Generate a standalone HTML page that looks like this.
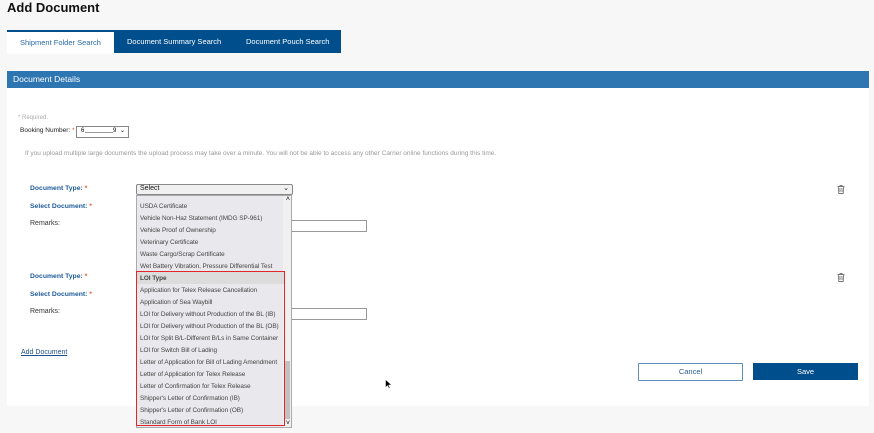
<!DOCTYPE html><html><head><style>
body{margin:0;width:874px;height:433px;background:#f7f7f7;font-family:"Liberation Sans",Arial,sans-serif;position:relative;overflow:hidden}
.a{position:absolute;white-space:nowrap}
.lbl{font-size:6.8px;color:#1d5a9a;font-weight:bold}
.req{color:#e2572a}
.li{position:absolute;left:3px;font-size:6.4px;color:#444;line-height:12px;letter-spacing:-0.05px}
</style></head><body>
<div class="a" style="left:7px;top:0;font-size:13px;font-weight:bold;color:#111">Add Document</div>
<div class="a" style="left:7px;top:30px;width:334px;height:23px;background:#004f8c"></div>
<div class="a" style="left:7px;top:31px;width:107px;height:22px;background:#fff;border-top:1px solid #004f8c"></div>
<div class="a" style="left:20px;top:38px;font-size:7.5px;color:#2b6aa8">Shipment Folder Search</div>
<div class="a" style="left:127px;top:37px;font-size:7.5px;color:#fff">Document Summary Search</div>
<div class="a" style="left:246px;top:37px;font-size:7.5px;color:#fff">Document Pouch Search</div>
<div class="a" style="left:7px;top:71px;width:862px;height:335px;background:#fff"></div>
<div class="a" style="left:7px;top:71px;width:862px;height:17px;background:#2e76b1"></div>
<div class="a" style="left:13px;top:74px;font-size:8.5px;color:#fff">Document Details</div>
<div class="a" style="left:18px;top:115px;font-size:6px;color:#aaa">* Required.</div>
<div class="a" style="left:20px;top:127px;font-size:6.5px;color:#222">Booking Number: <span class="req">*</span></div>
<div class="a" style="left:76px;top:126px;width:51px;height:10px;border:1px solid #888;background:#fff;font-size:6px"><span style="position:absolute;left:4px;top:1px">6</span><span style="position:absolute;left:8px;top:5px;width:28px;height:1px;background:#999"></span><span style="position:absolute;left:36px;top:1px">9</span><span style="position:absolute;left:43px;top:0px">⌄</span></div>
<div class="a" style="left:25px;top:150px;font-size:6.5px;color:#999">If you upload multiple large documents the upload process may take over a minute. You will not be able to access any other Carrier online functions during this time.</div>
<div class="a lbl" style="left:30px;top:185px">Document Type: <span class="req">*</span></div>
<div class="a lbl" style="left:30px;top:203px">Select Document: <span class="req">*</span></div>
<div class="a" style="left:30px;top:220px;font-size:7px;color:#333">Remarks:</div>
<div class="a" style="left:285px;top:220px;width:80px;height:10px;border:1px solid #999"></div>
<div class="a lbl" style="left:30px;top:273px">Document Type: <span class="req">*</span></div>
<div class="a lbl" style="left:30px;top:291px">Select Document: <span class="req">*</span></div>
<div class="a" style="left:30px;top:308px;font-size:7px;color:#333">Remarks:</div>
<div class="a" style="left:285px;top:308px;width:80px;height:10px;border:1px solid #999"></div>
<div class="a" style="left:21px;top:349px;font-size:7px;color:#1d4f8a;text-decoration:underline">Add Document</div>
<svg class="a" style="left:837px;top:185px" width="8" height="9" viewBox="0 0 8 9"><path d="M0.5 1.5H7.5M3 1.5V0.5H5V1.5M1.3 1.5L1.8 8.5H6.2L6.7 1.5M3 3V7M5 3V7" stroke="#777" fill="none" stroke-width="0.9"/></svg>
<svg class="a" style="left:837px;top:273px" width="8" height="9" viewBox="0 0 8 9"><path d="M0.5 1.5H7.5M3 1.5V0.5H5V1.5M1.3 1.5L1.8 8.5H6.2L6.7 1.5M3 3V7M5 3V7" stroke="#777" fill="none" stroke-width="0.9"/></svg>
<div class="a" style="left:638px;top:363px;width:103px;height:16px;border:1px solid #5b8ec0;border-radius:1px;background:#fff;font-size:7.5px;color:#2b5d92;text-align:center;line-height:16px">Cancel</div>
<div class="a" style="left:753px;top:363px;width:105px;height:17px;background:#004f8c;font-size:7.5px;color:#fff;text-align:center;line-height:17px">Save</div>
<svg class="a" style="left:385px;top:379px" width="7" height="10" viewBox="0 0 7 10"><path d="M0.5 0.5V8.5L2.5 6.5L4 9.5L5 9L3.6 6H6.5Z" fill="#000" stroke="#fff" stroke-width="0.5"/></svg>
<div class="a" style="left:136px;top:184px;width:155px;height:9px;border:1px solid #888;border-radius:2px;background:#f0f0f0;font-size:7px;color:#111"><span style="position:absolute;left:3px;top:0">Select</span><span style="position:absolute;right:3px;top:-1px">⌄</span></div>
<div class="a" style="left:136px;top:195px;width:156px;height:233px;background:#e9e8ec;border:1px solid #aaa;box-sizing:border-box;overflow:hidden">
<div style="position:absolute;right:0;top:0;width:8px;height:100%;background:#f0f0f0"></div>
<div style="position:absolute;right:1px;top:165px;width:6px;height:58px;background:#c1c1c1"></div>
<div style="position:absolute;left:0;top:76px;width:147px;height:12px;background:#dcdcdc"></div>
<div class="li" style="top:5px">USDA Certificate</div>
<div class="li" style="top:17px">Vehicle Non-Haz Statement (IMDG SP-961)</div>
<div class="li" style="top:29px">Vehicle Proof of Ownership</div>
<div class="li" style="top:41px">Veterinary Certificate</div>
<div class="li" style="top:53px">Waste Cargo/Scrap Certificate</div>
<div class="li" style="top:65px">Wet Battery Vibration, Pressure Differential Test</div>
<div class="li" style="top:77px;font-weight:bold">LOI Type</div>
<div class="li" style="top:89px">Application for Telex Release Cancellation</div>
<div class="li" style="top:101px">Application of Sea Waybill</div>
<div class="li" style="top:113px">LOI for Delivery without Production of the BL (IB)</div>
<div class="li" style="top:125px">LOI for Delivery without Production of the BL (OB)</div>
<div class="li" style="top:137px">LOI for Split B/L-Different B/Ls in Same Container</div>
<div class="li" style="top:149px">LOI for Switch Bill of Lading</div>
<div class="li" style="top:161px">Letter of Application for Bill of Lading Amendment</div>
<div class="li" style="top:173px">Letter of Application for Telex Release</div>
<div class="li" style="top:185px">Letter of Confirmation for Telex Release</div>
<div class="li" style="top:197px">Shipper's Letter of Confirmation (IB)</div>
<div class="li" style="top:209px">Shipper's Letter of Confirmation (OB)</div>
<div class="li" style="top:221px">Standard Form of Bank LOI</div>
<div style="position:absolute;right:1px;top:0;font-size:7px">˄</div>
<div style="position:absolute;right:1px;bottom:0;font-size:7px">˅</div>
</div>
<div class="a" style="left:136px;top:271px;width:149px;height:155px;border:1.5px solid #e0252b;box-sizing:border-box"></div>
</body></html>
